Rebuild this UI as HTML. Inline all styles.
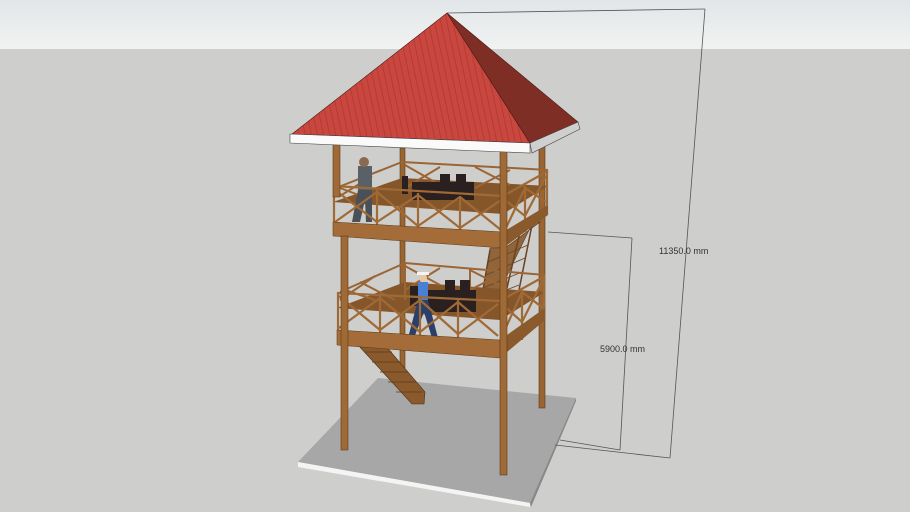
<!DOCTYPE html>
<html><head><meta charset="utf-8"><style>
html,body{margin:0;padding:0;width:910px;height:512px;overflow:hidden;background:#cdcdcb}
svg{display:block}
text{font-family:"Liberation Sans",sans-serif;font-size:9px;fill:#333}
</style></head><body>
<svg width="910" height="512" viewBox="0 0 910 512">
<defs>
<linearGradient id="sky" x1="0" y1="0" x2="0" y2="1"><stop offset="0" stop-color="#e2e6e8"/><stop offset="1" stop-color="#f1f2f2"/></linearGradient>
<pattern id="stripes" width="6" height="6" patternUnits="userSpaceOnUse" patternTransform="rotate(-12)"><rect width="6" height="6" fill="#c9473e"/><rect width="1" height="6" fill="#b23c34"/></pattern>
</defs>
<rect x="0" y="0" width="910" height="49" fill="url(#sky)"/>
<rect x="0" y="49" width="910" height="463" fill="#cececc"/>
<polygon points="298,462 378,378 576,398 530,503" fill="#a7a7a7"/>
<polygon points="298,462 530,503 530,507 298,467" fill="#f4f4f4"/>
<polygon points="530,503 576,398 576,401 531,507" fill="#888"/>
<g stroke="#555" stroke-width="0.8" fill="none">
<line x1="447" y1="13" x2="705" y2="9"/><line x1="705" y1="9" x2="670" y2="458"/><line x1="555" y1="445" x2="670" y2="458"/>
<line x1="548" y1="232" x2="632" y2="238"/><line x1="632" y1="238" x2="620" y2="450"/><line x1="560" y1="440" x2="620" y2="450"/>
</g>
<text x="659" y="254">11350.0 mm</text>
<text x="600" y="352">5900.0 mm</text>
<g fill="#9a6433" stroke="#5a3a1a" stroke-width="0.6">
<rect x="400" y="148" width="5" height="232"/>
<rect x="539" y="145" width="6" height="263"/>
</g>
<polygon points="358,345 385,345 425,392 424,404 412,404" fill="#8a5a2d" stroke="#4a2f15" stroke-width="0.6"/>
<g stroke="#5a3a1a" stroke-width="0.7"><line x1="365" y1="352" x2="392" y2="352"/><line x1="372" y1="362" x2="400" y2="362"/><line x1="380" y1="372" x2="408" y2="372"/><line x1="388" y1="382" x2="416" y2="382"/><line x1="396" y1="392" x2="423" y2="392"/></g>
<polygon points="490,248 505,248 540,222 533,222 500,290 485,318 478,318" fill="#8a5a2d" stroke="#4a2f15" stroke-width="0.6" opacity="0.9"/>
<g stroke="#6b4320" stroke-width="1.5"><line x1="490" y1="250" x2="478" y2="318"/><line x1="532" y1="225" x2="515" y2="310"/><line x1="520" y1="232" x2="500" y2="318"/></g>
<g stroke="#6b4320" stroke-width="0.8"><line x1="488" y1="262" x2="528" y2="245"/><line x1="486" y1="275" x2="525" y2="258"/><line x1="483" y1="288" x2="522" y2="272"/><line x1="481" y1="300" x2="519" y2="285"/></g>
<!-- LOWER DECK -->
<polygon points="337,308 405,282 545,292 500,320" fill="#86562b"/>
<g stroke="#9b6535" stroke-width="2" fill="none">
<polyline points="340,292 405,263 545,275"/>
<line x1="405" y1="263" x2="405" y2="300"/>
<line x1="470" y1="268" x2="470" y2="290"/>
<path d="M345,290 L375,300 M360,282 L395,300 M375,276 L340,300 M405,266 L440,285 M440,268 L405,290 M470,270 L505,288 M505,272 L470,290"/>
</g>
<rect x="428" y="290" width="48" height="22" fill="#2a2020"/>
<rect x="445" y="280" width="10" height="16" fill="#2a2020"/><rect x="460" y="280" width="10" height="16" fill="#2a2020"/>
<rect x="410" y="286" width="8" height="20" fill="#2a2020"/>
<rect x="418" y="282" width="10" height="18" fill="#4a7fd6"/>
<circle cx="423" cy="278" r="4" fill="#e8c8a0"/><rect x="417" y="272" width="12" height="3" fill="#f4f4f4"/>
<polygon points="418,300 428,300 438,338 432,338 424,312 414,338 408,338" fill="#2a3f6a"/>
<g stroke="#a06a36" stroke-width="2.2" fill="none">
<path d="M337,293 L500,301 L545,276"/>
<path d="M339,296 L380,330 M380,298 L339,328 M380,298 L420,332 M420,300 L380,330 M420,300 L458,334 M458,302 L420,332 M458,302 L498,336 M498,304 L458,334"/>
<path d="M502,304 L522,322 M522,292 L502,336 M522,292 L543,308 M543,280 L522,322"/>
<line x1="338" y1="292" x2="338" y2="345"/><line x1="380" y1="296" x2="380" y2="342"/><line x1="420" y1="298" x2="420" y2="345"/><line x1="458" y1="300" x2="458" y2="350"/><line x1="522" y1="290" x2="522" y2="340"/><line x1="544" y1="276" x2="544" y2="320"/>
</g>
<polygon points="337,330 500,340 500,358 337,345" fill="#a46c38" stroke="#5a3a1a" stroke-width="0.5"/>
<polygon points="500,340 545,308 545,320 500,358" fill="#8a5a2d"/>
<!-- UPPER DECK -->
<polygon points="333,202 402,178 548,186 503,214" fill="#86562b"/>
<g stroke="#9b6535" stroke-width="2" fill="none"><polyline points="336,188 402,162 548,170"/>
<path d="M340,188 L372,200 M372,176 L340,196 M405,165 L440,185 M440,167 L405,188 M475,167 L510,185 M510,170 L475,188"/></g>
<rect x="412" y="182" width="62" height="18" fill="#2a2020"/>
<rect x="440" y="174" width="10" height="16" fill="#2a2020"/><rect x="456" y="174" width="10" height="16" fill="#2a2020"/>
<rect x="402" y="176" width="6" height="18" fill="#2a2020"/>
<rect x="358" y="166" width="14" height="24" fill="#5a6068"/>
<circle cx="364" cy="162" r="5" fill="#8a6a50"/>
<polygon points="358,190 372,190 372,222 366,222 365,200 360,222 352,222" fill="#4a5058"/>
<g stroke="#a06a36" stroke-width="2.2" fill="none">
<path d="M333,186 L503,196 L548,171"/>
<path d="M335,190 L377,222 M377,192 L335,222 M377,192 L418,226 M418,195 L377,222 M418,195 L460,228 M460,197 L418,226 M460,197 L501,230 M501,200 L460,228"/>
<path d="M505,200 L525,216 M525,188 L505,230 M525,188 L546,202 M546,176 L525,216"/>
<line x1="334" y1="185" x2="334" y2="236"/><line x1="377" y1="190" x2="377" y2="236"/><line x1="418" y1="193" x2="418" y2="240"/><line x1="460" y1="196" x2="460" y2="244"/><line x1="525" y1="186" x2="525" y2="232"/><line x1="547" y1="171" x2="547" y2="215"/>
</g>
<polygon points="333,222 503,232 503,248 333,236" fill="#a46c38" stroke="#5a3a1a" stroke-width="0.5"/>
<polygon points="503,232 548,205 548,215 503,248" fill="#8a5a2d"/>
<g fill="#a06a36" stroke="#5a3a1a" stroke-width="0.6">
<rect x="333" y="142" width="7" height="55"/>
<rect x="341" y="236" width="7" height="214"/>
<rect x="500" y="150" width="7" height="325"/>
</g>
<polygon points="447,13 292,134 530,143" fill="url(#stripes)" stroke="#4a1a14" stroke-width="0.6"/>
<polygon points="447,13 530,143 578,122" fill="#7f2e26" stroke="#4a1a14" stroke-width="0.6"/>
<polygon points="290,134 530,143 530,153 290,143" fill="#fafafa" stroke="#444" stroke-width="0.6"/>
<polygon points="530,143 578,122 580,129 532,153" fill="#cfcfcf" stroke="#444" stroke-width="0.6"/>
</svg>
</body></html>
